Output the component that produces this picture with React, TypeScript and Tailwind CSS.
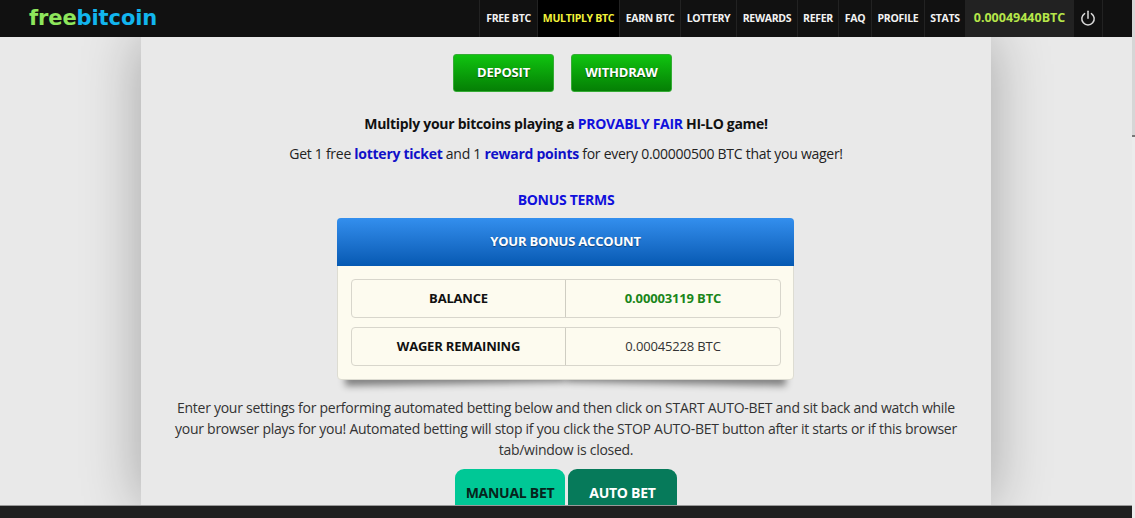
import React from "react";

const navItems = [
  { label: "FREE BTC", w: "w-[58px]" },
  { label: "MULTIPLY BTC", w: "w-[82px]", active: true },
  { label: "EARN BTC", w: "w-[61px]" },
  { label: "LOTTERY", w: "w-[56px]" },
  { label: "REWARDS", w: "w-[61px]" },
  { label: "REFER", w: "w-[41px]" },
  { label: "FAQ", w: "w-[33px]" },
  { label: "PROFILE", w: "w-[53px]" },
  { label: "STATS", w: "w-[41px]" },
];

function GreenButton({ children }: { children: React.ReactNode }) {
  return (
    <button className="w-[101px] h-[38px] rounded-[3px] border border-[#35ab35] bg-gradient-to-b from-[#10c410] to-[#057f05] text-[13px] font-bold tracking-[-0.2px] text-white [text-shadow:0_1px_1px_rgba(0,0,0,0.5)]">
      {children}
    </button>
  );
}

function Row({ label, value, green }: { label: string; value: string; green?: boolean }) {
  return (
    <div className="flex h-[39px] rounded-[4px] border border-[#d8d6cc]">
      <div className="flex w-[214px] items-center justify-center border-r border-[#cfcdc2] text-[13px] font-bold tracking-[-0.2px] text-[#111]">
        {label}
      </div>
      <div className={`flex flex-1 items-center justify-center text-[13px] tracking-[-0.15px] ${green ? "font-bold text-[#1a861a]" : "text-[#333]"}`}>
        {value}
      </div>
    </div>
  );
}

export default function App() {
  return (
    <div className="relative flex h-[518px] w-[1135px] flex-col overflow-hidden bg-[#e9e9e9] font-['Open_Sans',sans-serif] text-[#333]">
      <header className="flex h-[37px] shrink-0 items-stretch bg-[#111111]">
        <div className="ml-[29px] flex items-center text-[21px] font-bold leading-none tracking-[-0.1px] font-['DejaVu_Sans',sans-serif]">
          <span className="text-[#8ee65c]">free</span>
          <span className="text-[#12b5ee]">bitcoin</span>
        </div>
        <nav className="ml-auto mr-[32px] flex items-stretch">
          {navItems.map((item) => (
            <a
              key={item.label}
              className={`flex ${item.w} items-center justify-center border-l border-[#222] text-[10.5px] font-bold tracking-[-0.3px] ${
                item.active ? "bg-black text-[#f2f23a]" : "text-[#f2f2f2]"
              }`}
            >
              {item.label}
            </a>
          ))}
          <div className="flex w-[109px] items-center justify-center bg-[#222222] text-[12.5px] font-bold text-[#b6e64a]">
            0.00049440BTC
          </div>
          <div className="flex w-[29px] items-center justify-center border-r border-[#222] text-[#d8d8d8]">
            <svg width="16" height="17" viewBox="0 0 16 17" fill="none" stroke="currentColor" strokeWidth="1.5" strokeLinecap="round">
              <path d="M8 1.2v7" />
              <path d="M4.6 3.6a6.2 6.2 0 1 0 6.8 0" />
            </svg>
          </div>
        </nav>
      </header>

      <main className="min-h-0 flex-1 overflow-hidden">
        <div className="ml-[141px] flex h-full w-[850px] flex-col items-center bg-[#e9e9e9] pt-[17px] text-[14px] tracking-[-0.27px] shadow-[0_0_55px_rgba(0,0,0,0.3)]">
          <div className="mr-[7px] flex gap-[17px]">
            <GreenButton>DEPOSIT</GreenButton>
            <GreenButton>WITHDRAW</GreenButton>
          </div>

          <p className="mt-[21px] leading-[22px] font-bold tracking-[-0.3px] text-[#111]">
            Multiply your bitcoins playing a <span className="text-[#1010dc]">PROVABLY FAIR</span> HI-LO game!
          </p>
          <p className="mt-[8px] leading-[22px] text-[#222]">
            Get 1 free <span className="font-bold text-[#1010c8]">lottery ticket</span> and 1{" "}
            <span className="font-bold text-[#1010c8]">reward points</span> for every 0.00000500 BTC that you wager!
          </p>
          <p className="mt-[24px] leading-[22px] font-bold tracking-[-0.3px] text-[#1010dc]">BONUS TERMS</p>

          <div className="relative isolate mr-[1px] mt-[7px] w-[457px] tracking-normal">
            <div className="absolute bottom-[3px] left-[8px] -z-10 h-[12px] w-[220px] -rotate-[1deg] shadow-[0_7px_7px_rgba(0,0,0,0.45)]" />
            <div className="absolute bottom-[3px] right-[8px] -z-10 h-[12px] w-[220px] rotate-[1deg] shadow-[0_7px_7px_rgba(0,0,0,0.45)]" />
            <section className="rounded-[4px] border border-[#dddcd2] bg-[#fdfbef]">
              <div className="-mx-px -mt-px flex h-[48px] items-center justify-center rounded-t-[4px] bg-gradient-to-b from-[#338fee] to-[#0559b2] text-[13px] font-bold tracking-[-0.2px] text-white [text-shadow:0_1px_1px_rgba(0,0,0,0.4)]">
                YOUR BONUS ACCOUNT
              </div>
              <div className="flex flex-col gap-[9px] pb-[13px] pl-[13px] pr-[12px] pt-[13px]">
                <Row label="BALANCE" value="0.00003119 BTC" green />
                <Row label="WAGER REMAINING" value="0.00045228 BTC" />
              </div>
            </section>
          </div>

          <p className="mt-[17px] w-[800px] text-center leading-[21px] text-[#333]">
            Enter your settings for performing automated betting below and then click on START AUTO-BET and sit back and watch while
            your browser plays for you! Automated betting will stop if you click the STOP AUTO-BET button after it starts or if this
            browser tab/window is closed.
          </p>

          <div className="mt-[9px] flex gap-[3px]">
            <button className="h-[48px] w-[110px] rounded-t-[9px] bg-[#00c896] pb-[1px] text-[14px] font-bold text-[#07241c]">
              MANUAL BET
            </button>
            <button className="h-[48px] w-[109px] rounded-t-[9px] bg-[#067a5a] pb-[1px] text-[14px] font-bold text-white">
              AUTO BET
            </button>
          </div>
        </div>
      </main>

      <footer className="h-[13px] shrink-0 border-t border-[#999] bg-[#202020]" />

      {/* thin scrollbar strip at the window's right edge */}
      <div className="absolute inset-y-0 right-0 w-[3px] bg-[#ececec]">
        <div className="h-[137px] border-b-2 border-[#777] bg-[#d6d6d6]" />
      </div>
    </div>
  );
}
